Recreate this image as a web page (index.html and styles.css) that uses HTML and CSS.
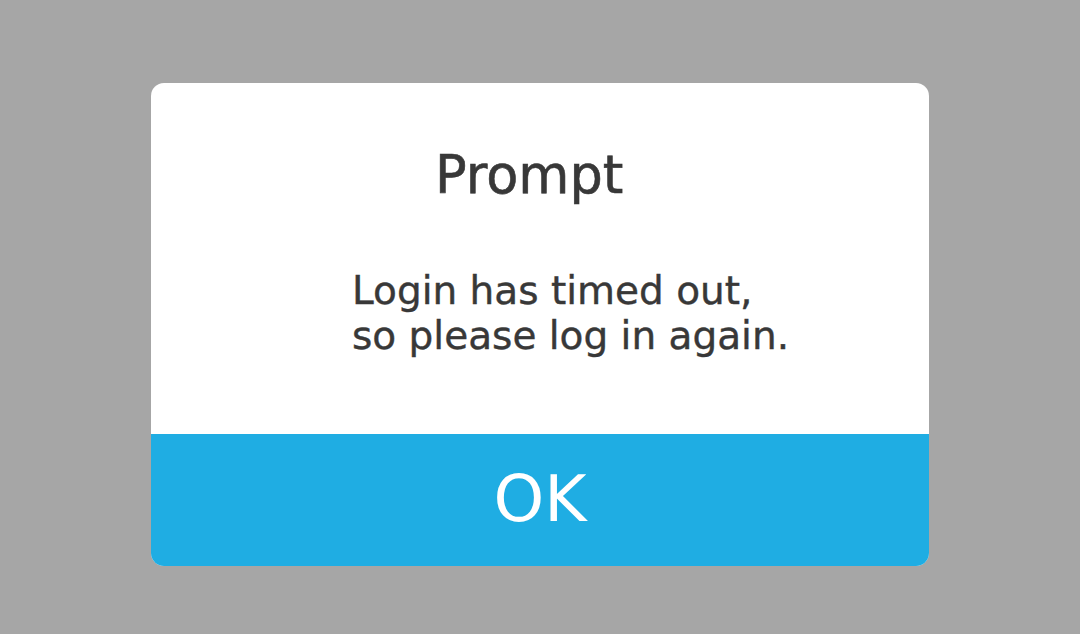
FILE: index.html
```html
<!DOCTYPE html>
<html>
<head>
<meta charset="utf-8">
<link rel="stylesheet" href="styles.css">
</head>
<body>
<div class="dialog">
  <div class="content">
    <div class="title">Prompt</div>
    <div class="message">Login has timed out,<br>so please log in again.</div>
  </div>
  <div class="ok">OK</div>
</div>
</body>
</html>
```

FILE: styles.css
```css
html, body {
  margin: 0;
  padding: 0;
  background: #a6a6a6;
  width: 1080px;
  height: 634px;
  overflow: hidden;
  font-family: "DejaVu Sans", sans-serif;
}
.dialog {
  margin: 83px 0 0 151px;
  width: 778px;
  height: 483px;
  border-radius: 13px;
  overflow: hidden;
  background: #ffffff;
  display: flex;
  flex-direction: column;
}
.content {
  height: 351px;
  box-sizing: border-box;
  padding-top: 62px;
}
.title {
  padding-left: 284px;
  font-size: 52.5px;
  line-height: 60px;
  color: #383838;
  -webkit-text-stroke: 0.6px #383838;
}
.message {
  margin-top: 63px;
  padding-left: 201px;
  font-size: 39px;
  line-height: 45px;
  color: #383838;
  -webkit-text-stroke: 0.4px #383838;
}
.ok {
  flex: 1;
  background: #1fade3;
  color: #ffffff;
  font-size: 64.5px;
  display: flex;
  align-items: center;
  justify-content: center;
  padding-bottom: 4px;
}
```
